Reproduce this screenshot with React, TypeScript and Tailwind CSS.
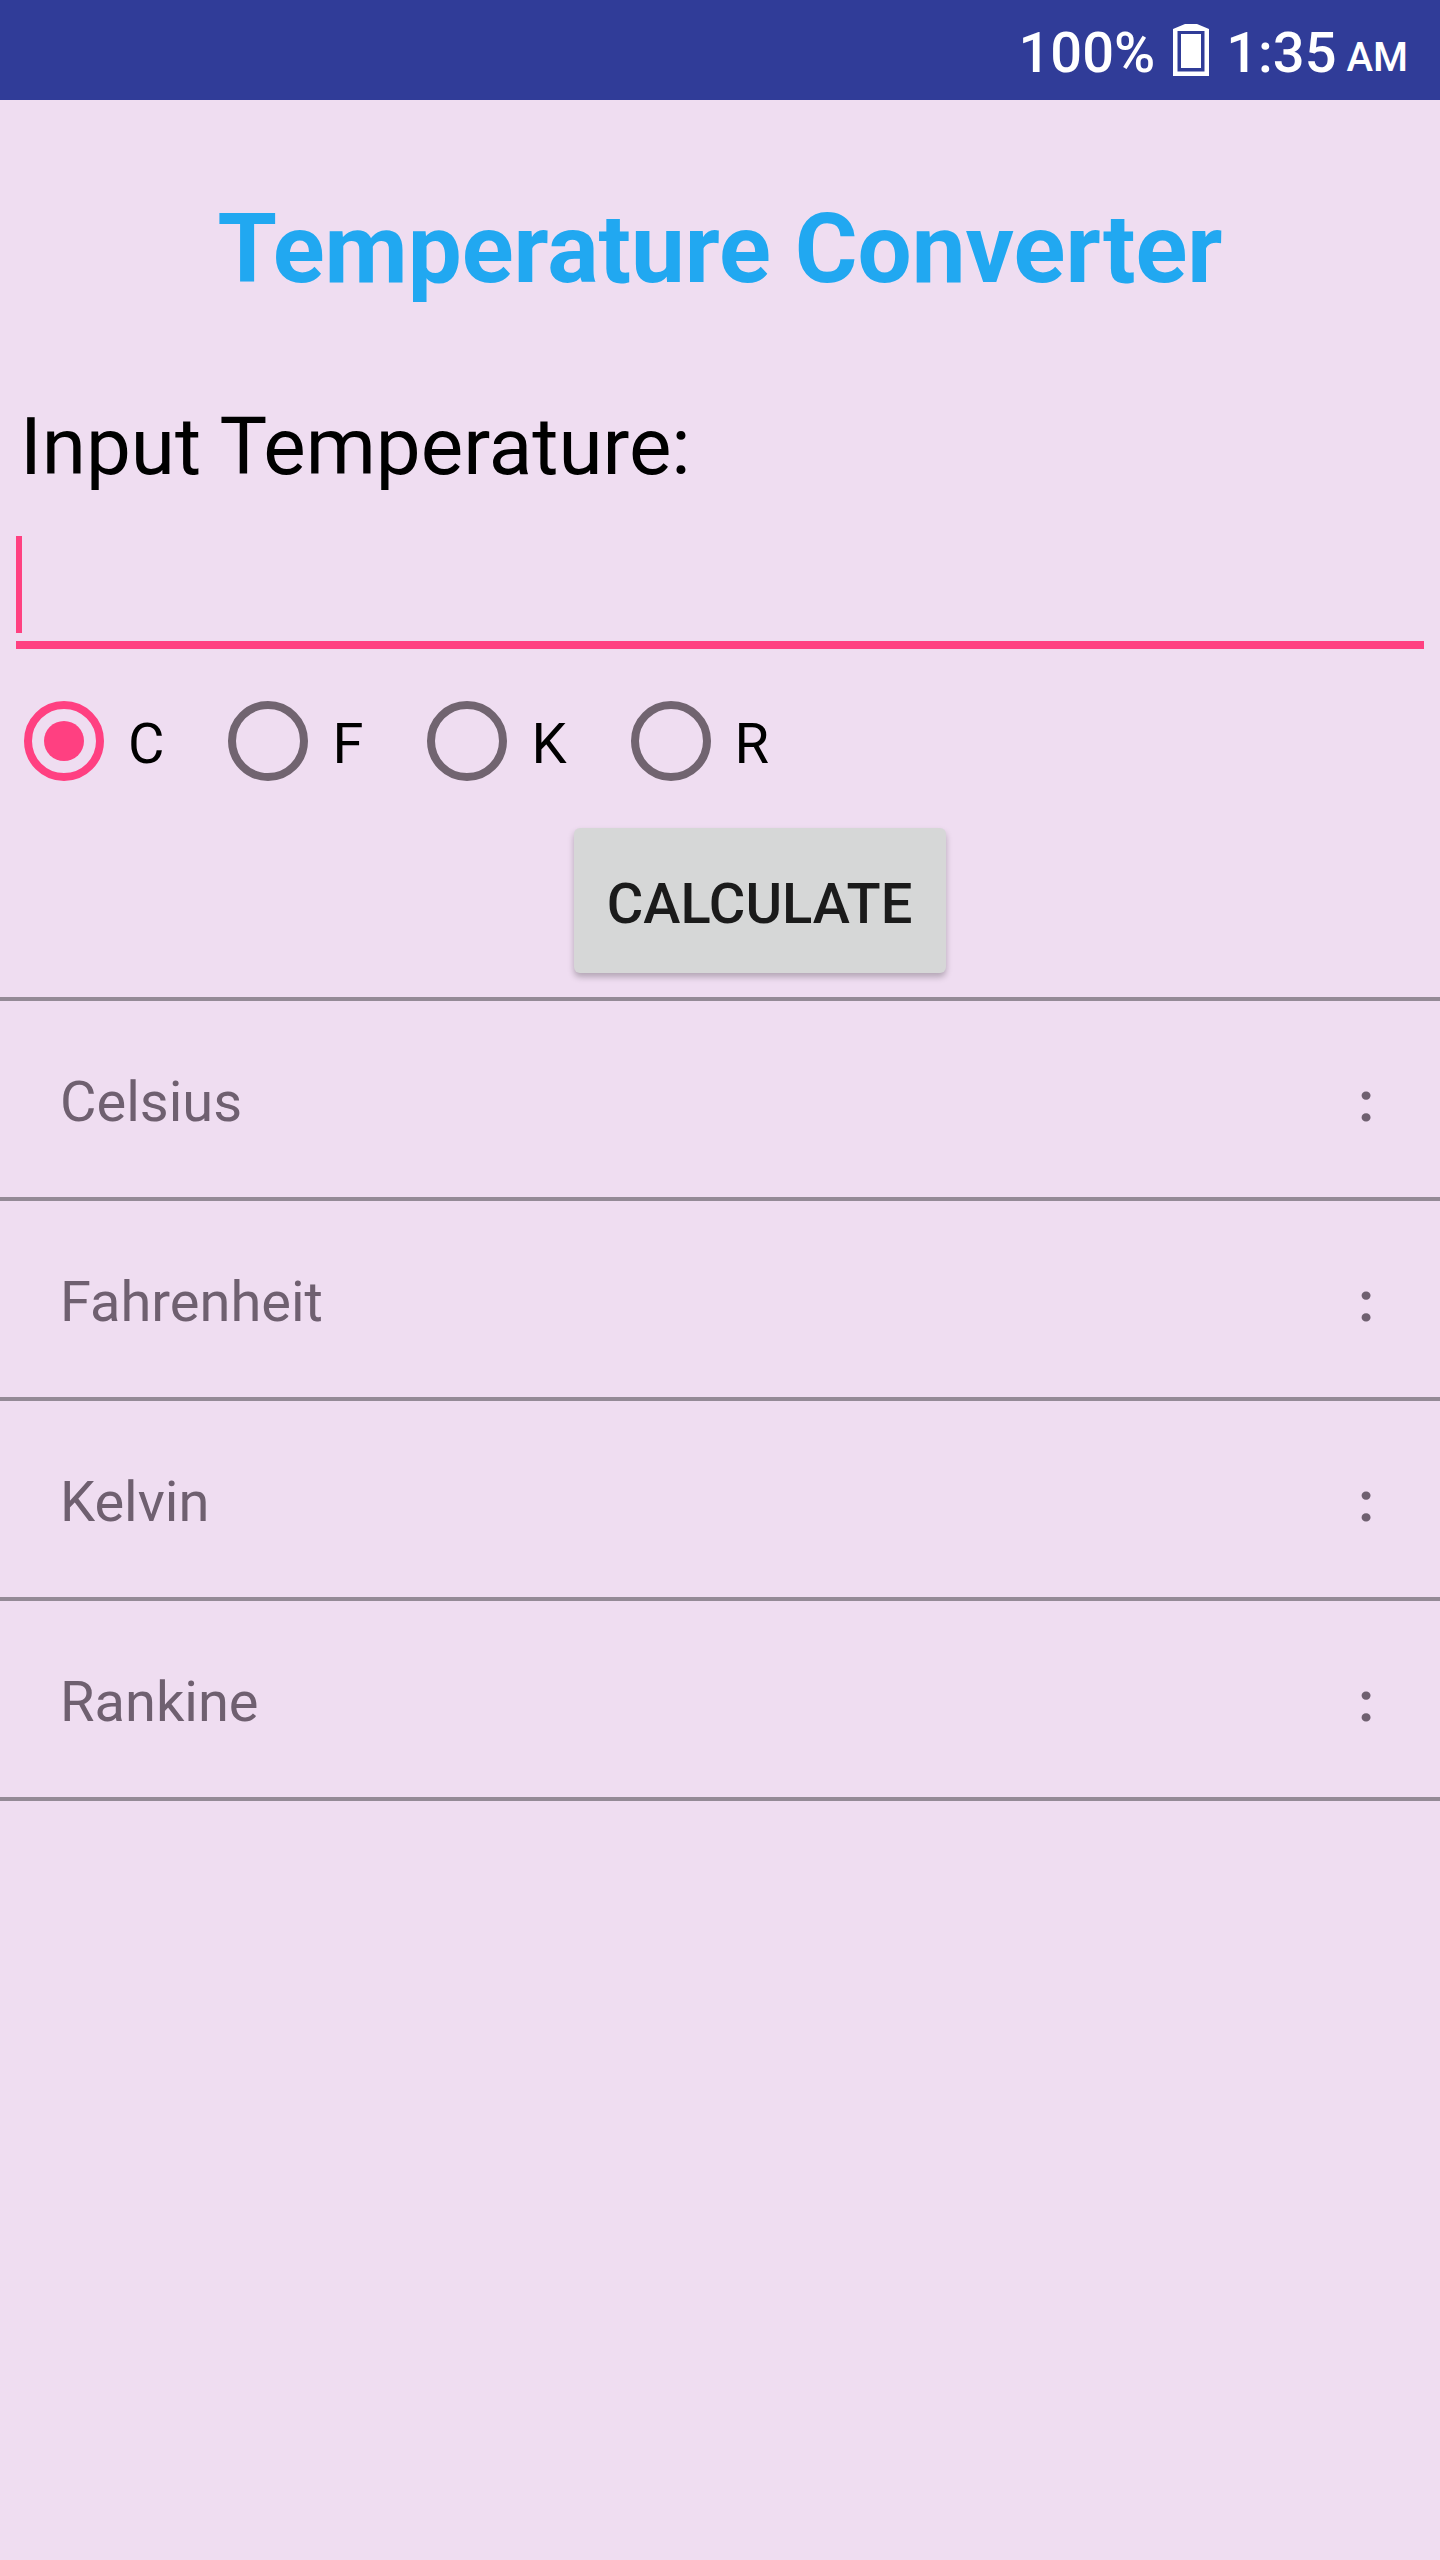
import React from "react";

const units = ["Celsius", "Fahrenheit", "Kelvin", "Rankine"];
const scales = ["C", "F", "K", "R"];

const Battery = () => (
  <svg width="36" height="52" viewBox="0 0 36 52" className="mb-[5px] ml-[18px] mr-[17px] shrink-0">
    <path
      fillRule="evenodd"
      fill="#ffffff"
      d="M0 5L12 0H24L36 5V52H0ZM4.5 7V47.5H31.5V7Z"
    />
    <rect x="8" y="10" width="20" height="34" fill="#ffffff" />
  </svg>
);

const Radio = ({ label, checked }: { label: string; checked?: boolean }) => (
  <div className="flex items-center gap-[24px]">
    <div
      className={
        checked
          ? "flex h-[80px] w-[80px] items-center justify-center rounded-full border-[8px] border-[#ff4081]"
          : "h-[80px] w-[80px] rounded-full border-[8px] border-[#716470]"
      }
    >
      {checked && <div className="h-[40px] w-[40px] rounded-full bg-[#ff4081]" />}
    </div>
    <span className="mt-[5px] text-[56px] leading-[66px] text-black">{label}</span>
  </div>
);

export default function App() {
  return (
    <div className="flex h-[2560px] w-[1440px] flex-col bg-[#efddf1] font-['Roboto',sans-serif]">
      <div className="flex h-[100px] items-center justify-end bg-[#303c98] pr-[32px] pt-[5px] font-medium text-white">
        <span className="text-[56px] leading-[66px]">100%</span>
        <Battery />
        <span className="text-[56px] leading-[66px]">1:35</span>
        <span className="ml-[10px] mt-[9px] text-[40px] leading-[47px]">AM</span>
      </div>

      <h1 className="mt-[93px] text-center text-[96px] font-bold leading-[112px] text-[#21a8f1]">
        Temperature Converter
      </h1>

      <div className="mt-[95px] pl-[20px] text-[80px] leading-[94px] text-black">Input Temperature:</div>

      <div className="mx-[16px] mt-[42px] border-b-[8px] border-[#ff4081] pb-[8px]">
        <div className="h-[97px] w-[6px] bg-[#ff4081]" />
      </div>

      <div className="mt-[52px] flex gap-[64px] pl-[24px]">
        {scales.map((s, i) => (
          <Radio key={s} label={s} checked={i === 0} />
        ))}
      </div>

      <div className="mt-[47px] flex justify-center pl-[79px]">
        <button className="h-[145px] w-[372px] rounded-[6px] bg-[#d6d7d7] pt-[6px] text-[56px] font-medium leading-[66px] text-[#1b1b1b] shadow-[0_4px_6px_rgba(0,0,0,0.25)]">
          CALCULATE
        </button>
      </div>

      <div className="mt-[24px] flex flex-col border-t-[4px] border-[#948a96]">
        {units.map((u) => (
          <div
            key={u}
            className="flex h-[200px] items-center justify-between border-b-[4px] border-[#948a96] pl-[60px] pr-[66px] pt-[6px] text-[56px] leading-[66px] text-[#6f6070]"
          >
            <span>{u}</span>
            <span className="font-bold">:</span>
          </div>
        ))}
      </div>
    </div>
  );
}
